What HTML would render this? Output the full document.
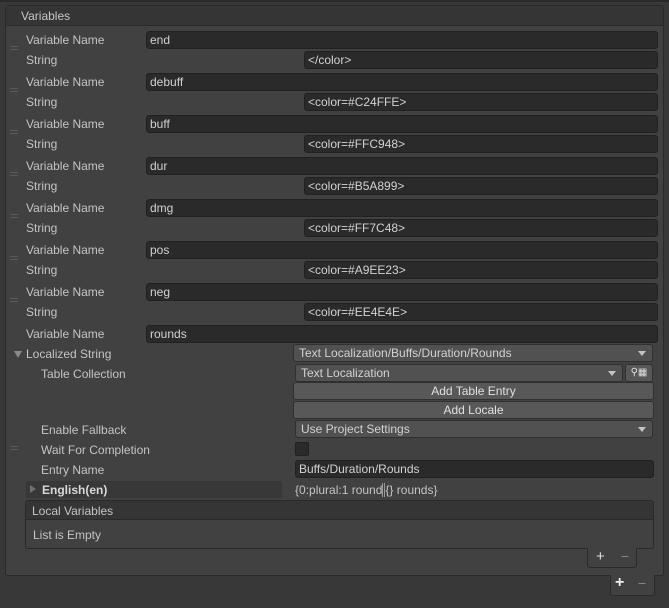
<!DOCTYPE html>
<html><head><style>
*{margin:0;padding:0;box-sizing:border-box}
body{width:669px;height:608px;background:#383838;font-family:"Liberation Sans",sans-serif;font-size:12px;color:#c4c4c4;position:relative;overflow:hidden}
.a{position:absolute;white-space:nowrap}
.f{position:absolute;background:#2a2a2a;border:1px solid #212121;border-radius:3px;height:18px;padding-left:3px;line-height:16px;color:#d2d2d2}
.b{position:absolute;background:#515151;border:1px solid #303030;border-radius:3px;height:18px;padding-left:5px;line-height:16px;color:#d2d2d2}
.btn{position:absolute;background:#585858;border:1px solid #303030;border-radius:3px;height:18px;line-height:16px;text-align:center;color:#e0e0e0}
.dd:after{content:"";position:absolute;right:6px;top:6px;border-left:4px solid transparent;border-right:4px solid transparent;border-top:5px solid #c4c4c4}
.h{position:absolute;left:10px;width:8px;height:4px;border-top:1px solid #5a5a5a;border-bottom:1px solid #5a5a5a}
</style></head><body>
<div class="a" style="left:0;top:0;width:669px;height:2px;background:#2a2a2a"></div>
<div class="a" style="left:5px;top:5px;width:659px;height:571px;background:#414141;border:1px solid #2a2a2a;border-radius:3px"></div>
<div class="a" style="left:6px;top:6px;width:657px;height:20px;background:#353535;border-bottom:1px solid #2a2a2a"></div>
<div class="a" style="left:21px;top:9px;color:#c8c8c8">Variables</div>

<div class="h" style="top:46px"></div>
<div class="a" style="left:26px;top:33px">Variable Name</div><div class="f" style="left:146px;top:31px;width:512px">end</div>
<div class="a" style="left:26px;top:53px">String</div><div class="f" style="left:304px;top:51px;width:354px">&lt;/color&gt;</div>

<div class="h" style="top:88px"></div>
<div class="a" style="left:26px;top:75px">Variable Name</div><div class="f" style="left:146px;top:73px;width:512px">debuff</div>
<div class="a" style="left:26px;top:95px">String</div><div class="f" style="left:304px;top:93px;width:354px">&lt;color=#C24FFE&gt;</div>

<div class="h" style="top:130px"></div>
<div class="a" style="left:26px;top:117px">Variable Name</div><div class="f" style="left:146px;top:115px;width:512px">buff</div>
<div class="a" style="left:26px;top:137px">String</div><div class="f" style="left:304px;top:135px;width:354px">&lt;color=#FFC948&gt;</div>

<div class="h" style="top:172px"></div>
<div class="a" style="left:26px;top:159px">Variable Name</div><div class="f" style="left:146px;top:157px;width:512px">dur</div>
<div class="a" style="left:26px;top:179px">String</div><div class="f" style="left:304px;top:177px;width:354px">&lt;color=#B5A899&gt;</div>

<div class="h" style="top:214px"></div>
<div class="a" style="left:26px;top:201px">Variable Name</div><div class="f" style="left:146px;top:199px;width:512px">dmg</div>
<div class="a" style="left:26px;top:221px">String</div><div class="f" style="left:304px;top:219px;width:354px">&lt;color=#FF7C48&gt;</div>

<div class="h" style="top:256px"></div>
<div class="a" style="left:26px;top:243px">Variable Name</div><div class="f" style="left:146px;top:241px;width:512px">pos</div>
<div class="a" style="left:26px;top:263px">String</div><div class="f" style="left:304px;top:261px;width:354px">&lt;color=#A9EE23&gt;</div>

<div class="h" style="top:298px"></div>
<div class="a" style="left:26px;top:285px">Variable Name</div><div class="f" style="left:146px;top:283px;width:512px">neg</div>
<div class="a" style="left:26px;top:305px">String</div><div class="f" style="left:304px;top:303px;width:354px">&lt;color=#EE4E4E&gt;</div>

<div class="h" style="top:446px"></div>
<div class="a" style="left:26px;top:327px">Variable Name</div><div class="f" style="left:146px;top:325px;width:512px">rounds</div>
<div class="a" style="left:14px;top:351px;border-left:4px solid transparent;border-right:4px solid transparent;border-top:7px solid #8a8a8a"></div>
<div class="a" style="left:26px;top:347px">Localized String</div>
<div class="b dd" style="left:293px;top:344px;width:360px">Text Localization/Buffs/Duration/Rounds</div>
<div class="a" style="left:41px;top:367px">Table Collection</div>
<div class="b dd" style="left:295px;top:364px;width:328px">Text Localization</div>
<div class="btn" style="left:625px;top:364px;width:28px;font-size:10px">&#9906;&#9638;</div>
<div class="btn" style="left:293px;top:382px;width:361px">Add Table Entry</div>
<div class="btn" style="left:293px;top:401px;width:361px">Add Locale</div>
<div class="a" style="left:41px;top:423px">Enable Fallback</div>
<div class="b dd" style="left:295px;top:420px;width:358px">Use Project Settings</div>
<div class="a" style="left:41px;top:443px">Wait For Completion</div>
<div class="a" style="left:295px;top:442px;width:14px;height:14px;background:#2a2a2a;border:1px solid #212121;border-radius:2px"></div>
<div class="a" style="left:41px;top:463px">Entry Name</div>
<div class="f" style="left:295px;top:460px;width:359px">Buffs/Duration/Rounds</div>
<div class="a" style="left:26px;top:481px;width:256px;height:17px;background:#383838"></div>
<div class="a" style="left:30px;top:485px;border-top:4px solid transparent;border-bottom:4px solid transparent;border-left:6px solid #707070"></div>
<div class="a" style="left:42px;top:483px;font-weight:bold;color:#d8d8d8">English(en)</div>
<div class="a" style="left:295px;top:483px">{0:plural:1 round<span style="border-left:1px solid #999;border-right:1px solid #999">&#8202;</span>{} rounds}</div>
<div class="a" style="left:25px;top:500px;width:629px;height:49px;background:#414141;border:1px solid #2a2a2a;border-radius:3px"></div>
<div class="a" style="left:26px;top:501px;width:627px;height:19px;background:#353535;border-bottom:1px solid #2a2a2a"></div>
<div class="a" style="left:32px;top:504px">Local Variables</div>
<div class="a" style="left:33px;top:528px">List is Empty</div>
<div class="a" style="left:587px;top:548px;width:50px;height:20px;background:#414141;border:1px solid #2a2a2a;border-top:none;border-radius:0 0 3px 3px"></div>
<div class="a" style="left:596px;top:548px;font-size:15px;color:#ddd">+</div>
<div class="a" style="left:621px;top:548px;font-size:14px;color:#888">−</div>
<div class="a" style="left:610px;top:575px;width:45px;height:21px;background:#414141;border:1px solid #2a2a2a;border-top:none;border-radius:0 0 3px 3px"></div>
<div class="a" style="left:615px;top:574px;font-size:16px;font-weight:bold;color:#eee">+</div>
<div class="a" style="left:638px;top:575px;font-size:14px;color:#888">−</div>
</body></html>
